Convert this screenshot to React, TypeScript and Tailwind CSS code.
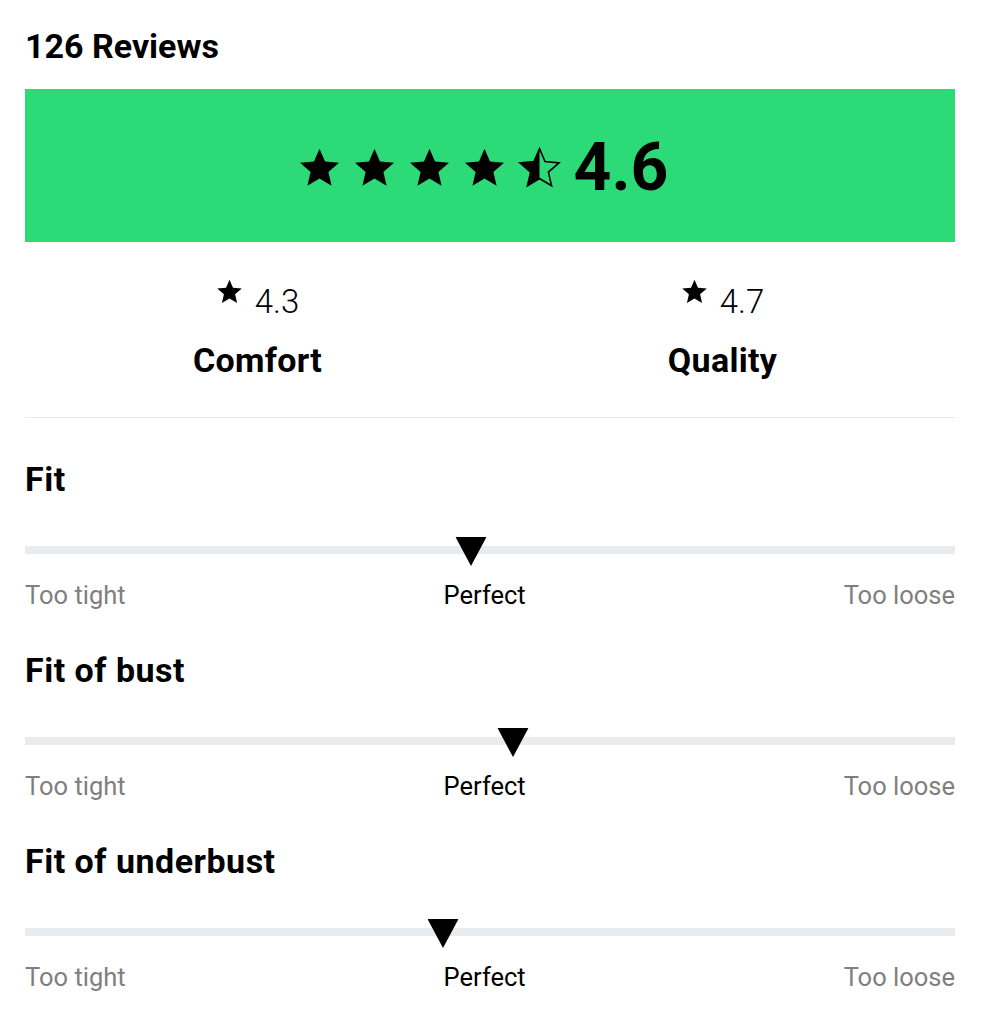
import React from "react";

const STAR = "M12 1.5l3.09 7.2 7.8.7-5.92 5.15 1.77 7.65L12 18.15 5.26 22.2l1.77-7.65L1.11 9.4l7.8-.7z";

const StarIcon = ({ className }: { className?: string }) => (
  <svg viewBox="0 0 24 24" className={className}>
    <path d={STAR} fill="currentColor" />
  </svg>
);

const HalfStarIcon = ({ className }: { className?: string }) => (
  <svg viewBox="0 0 24 24" className={className}>
    <defs>
      <clipPath id="half-left">
        <rect x="0" y="0" width="12" height="24" />
      </clipPath>
    </defs>
    <path d={STAR} fill="none" stroke="currentColor" strokeWidth="0.9" />
    <path d={STAR} fill="currentColor" clipPath="url(#half-left)" />
  </svg>
);

const fits = [
  { title: "Fit", pos: 48.0 },
  { title: "Fit of bust", pos: 52.47 },
  { title: "Fit of underbust", pos: 44.95 },
];

const SubRating = ({ score, label }: { score: string; label: string }) => (
  <div className="flex flex-col items-center">
    <div className="flex items-start gap-[12px]">
      <StarIcon className="h-[27px] w-[27px] text-black" />
      <span className="mt-[7px] text-[33px] font-light leading-none text-black">{score}</span>
    </div>
    <span className="mt-[25px] text-[34px] font-bold leading-none tracking-[0.3px] text-black">{label}</span>
  </div>
);

export default function App() {
  return (
    <div className="w-full bg-white pl-[25px] pr-[29px] pt-[28px] pb-[20px] text-black" style={{ fontFamily: "Roboto, 'Liberation Sans', sans-serif" }}>
      <h2 className="text-[34px] font-bold leading-[36px]">126 Reviews</h2>

      {/* overall score */}
      <div className="mt-[25px] flex h-[153px] items-center justify-center bg-[#2cda77] pt-[4px] pr-[14px]">
        <div className="flex items-center gap-[12px]">
          <StarIcon className="h-[43px] w-[43px]" />
          <StarIcon className="h-[43px] w-[43px]" />
          <StarIcon className="h-[43px] w-[43px]" />
          <StarIcon className="h-[43px] w-[43px]" />
          <HalfStarIcon className="h-[43px] w-[43px]" />
        </div>
        <span className="ml-[13px] text-[66px] font-bold leading-none">4.6</span>
      </div>

      <div className="grid grid-cols-2 border-b border-[#e8eaed] pt-[36px] pb-[40px]">
        <SubRating score="4.3" label="Comfort" />
        <SubRating score="4.7" label="Quality" />
      </div>

      {fits.map((f) => (
        <section key={f.title} className="pt-[43px]">
          <h3 className="text-[34px] font-bold leading-[36px] tracking-[0.5px]">{f.title}</h3>
          <div className="relative mt-[49px] h-[8px] bg-[#e9ecef]">
            <svg viewBox="0 0 31 29" className="absolute top-[-9px] h-[29px] w-[31px] -translate-x-1/2" style={{ left: `${f.pos}%` }}>
              <path d="M0 0h31L15.5 29z" fill="black" />
            </svg>
          </div>
          <div className="mt-[27px] flex justify-between text-[25.5px] leading-[28px]">
            <span className="text-[#7f7f7f]">Too tight</span>
            <span className="text-black">Perfect</span>
            <span className="text-[#7f7f7f]">Too loose</span>
          </div>
        </section>
      ))}
    </div>
  );
}
